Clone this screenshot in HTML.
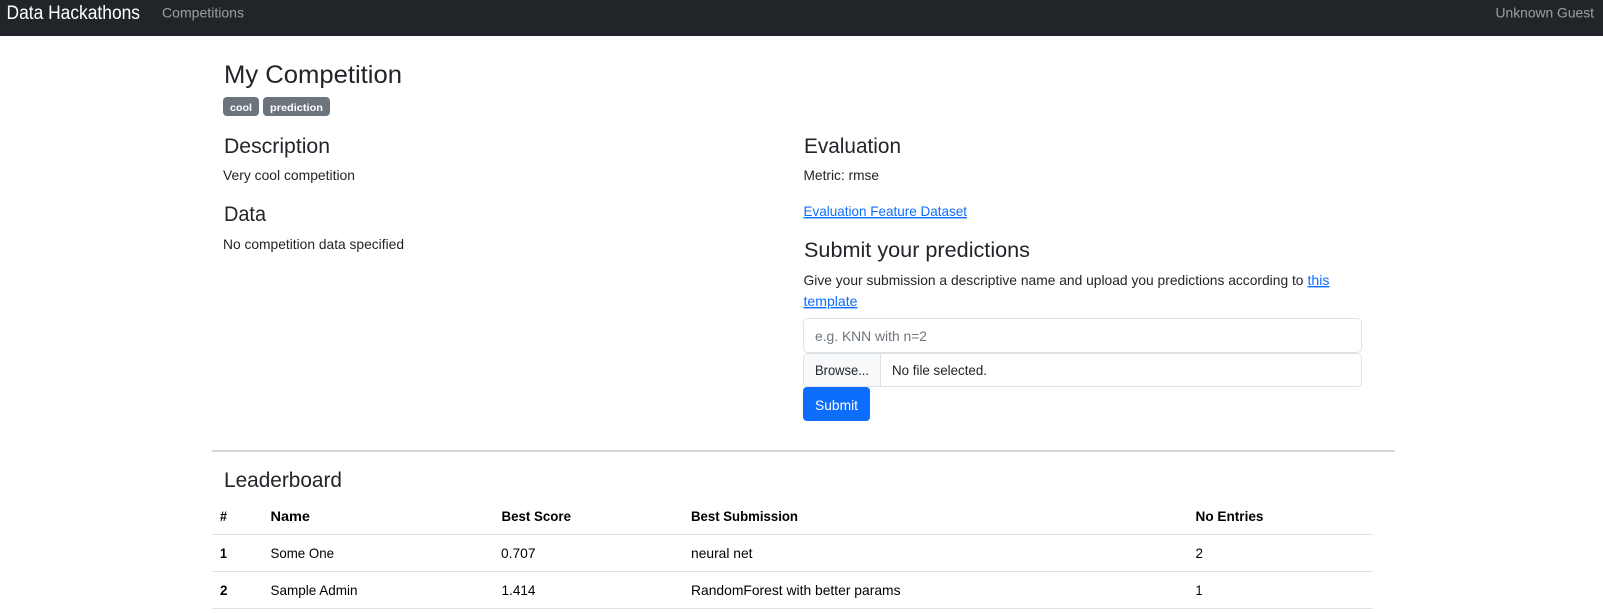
<!DOCTYPE html>
<html lang="en">
<head>
<meta charset="utf-8">
<title>Data Hackathons</title>
<style>
html,body{margin:0;padding:0;background:#fff;width:1603px;height:613px;overflow:hidden}
.b{position:absolute;box-sizing:border-box}
svg{position:absolute;left:0;top:0}
text{font-family:"Liberation Sans",sans-serif;fill:#212529;white-space:pre}
.bd{font-weight:700;fill:#000}
.h3{font-size:25px}
.h4{font-size:21px}
.p{font-size:14px}
.nav{font-size:14px;fill:rgba(255,255,255,.55)}
.lnk{fill:#0d6efd;text-decoration:underline;font-size:14px}
.td{font-size:14px;fill:#000}
.th{font-size:14px}
.bdg{font-size:10.5px;font-weight:700;fill:#fff}
</style>
</head>
<body>
<div class="b" style="left:0;top:0;width:1603px;height:36px;background:#212529"></div>
<div class="b" style="left:223px;top:97px;width:36px;height:19px;background:#6c757d;border-radius:4px"></div>
<div class="b" style="left:263px;top:97px;width:67px;height:19px;background:#6c757d;border-radius:4px"></div>
<div class="b" style="left:803px;top:318px;width:559px;height:35px;border:1px solid #dee2e6;border-radius:5px;background:#fff"></div>
<div class="b" style="left:803px;top:353px;width:559px;height:34px;border:1px solid #dee2e6;border-radius:5px;background:#fff;overflow:hidden"><div style="box-sizing:border-box;width:77px;height:100%;background:#f8f9fa;border-right:1px solid #dee2e6"></div></div>
<div class="b" style="left:803px;top:387px;width:67px;height:34px;background:#0d6efd;border-radius:4px"></div>
<div class="b" style="left:212px;top:450px;width:1183px;height:2px;background:#d6d6d8"></div>
<div class="b" style="left:212px;top:534px;width:1161px;height:1px;background:#dee2e6"></div>
<div class="b" style="left:212px;top:571px;width:1161px;height:1px;background:#dee2e6"></div>
<div class="b" style="left:212px;top:608px;width:1161px;height:1px;background:#dee2e6"></div>
<svg width="1603" height="613" viewBox="0 0 1603 613" xmlns="http://www.w3.org/2000/svg">
<text x="6.5" y="19" font-size="19" style="fill:#fff" textLength="133.5" lengthAdjust="spacingAndGlyphs">Data Hackathons</text>
<text class="nav" x="162" y="17.5" textLength="82" lengthAdjust="spacingAndGlyphs">Competitions</text>
<text class="nav" x="1495.5" y="17.5" textLength="98.5" lengthAdjust="spacingAndGlyphs">Unknown Guest</text>

<text class="h3" x="224" y="83" textLength="178" lengthAdjust="spacingAndGlyphs">My Competition</text>
<text class="bdg" x="230" y="111" textLength="22" lengthAdjust="spacingAndGlyphs">cool</text>
<text class="bdg" x="270" y="111" textLength="53" lengthAdjust="spacingAndGlyphs">prediction</text>

<text class="h4" x="224" y="153" textLength="106" lengthAdjust="spacingAndGlyphs">Description</text>
<text class="p" x="223" y="180" textLength="132" lengthAdjust="spacingAndGlyphs">Very cool competition</text>
<text class="h4" x="224" y="221" textLength="42" lengthAdjust="spacingAndGlyphs">Data</text>
<text class="p" x="223" y="249" textLength="181" lengthAdjust="spacingAndGlyphs">No competition data specified</text>

<text class="h4" x="804" y="153" textLength="97" lengthAdjust="spacingAndGlyphs">Evaluation</text>
<text class="p" x="803.5" y="180" textLength="75.5" lengthAdjust="spacingAndGlyphs">Metric: rmse</text>
<text class="lnk" x="803.5" y="216" textLength="163.5" lengthAdjust="spacingAndGlyphs">Evaluation Feature Dataset</text>
<text class="h4" x="804" y="257" textLength="226" lengthAdjust="spacingAndGlyphs">Submit your predictions</text>
<text class="p" x="803.5" y="285" textLength="500" lengthAdjust="spacingAndGlyphs">Give your submission a descriptive name and upload you predictions according to</text>
<text class="lnk" x="1307.5" y="285" textLength="22" lengthAdjust="spacingAndGlyphs">this</text>
<text class="lnk" x="803.5" y="306" textLength="54" lengthAdjust="spacingAndGlyphs">template</text>

<text class="p" x="815" y="341" style="fill:#6c757d" textLength="112" lengthAdjust="spacingAndGlyphs">e.g. KNN with n=2</text>
<text class="p" x="815" y="375" textLength="54" lengthAdjust="spacingAndGlyphs">Browse...</text>
<text class="p" x="892" y="375" textLength="95" lengthAdjust="spacingAndGlyphs">No file selected.</text>
<text class="p" x="815" y="410" style="fill:#fff" textLength="43" lengthAdjust="spacingAndGlyphs">Submit</text>

<text class="h4" x="224" y="487" font-size="21" textLength="118" lengthAdjust="spacingAndGlyphs">Leaderboard</text>

<text class="th bd" x="220" y="521" textLength="7" lengthAdjust="spacingAndGlyphs">#</text>
<text class="th bd" x="270.5" y="521" textLength="39.5" lengthAdjust="spacingAndGlyphs">Name</text>
<text class="th bd" x="501.5" y="521" textLength="69.5" lengthAdjust="spacingAndGlyphs">Best Score</text>
<text class="th bd" x="691" y="521" textLength="107" lengthAdjust="spacingAndGlyphs">Best Submission</text>
<text class="th bd" x="1195.5" y="521" textLength="68" lengthAdjust="spacingAndGlyphs">No Entries</text>

<text class="th bd" x="220" y="558" textLength="7" lengthAdjust="spacingAndGlyphs">1</text>
<text class="td" x="270.5" y="558" textLength="63.5" lengthAdjust="spacingAndGlyphs">Some One</text>
<text class="td" x="501" y="558" textLength="34.5" lengthAdjust="spacingAndGlyphs">0.707</text>
<text class="td" x="691" y="558" textLength="61.5" lengthAdjust="spacingAndGlyphs">neural net</text>
<text class="td" x="1195.5" y="558" textLength="7.5" lengthAdjust="spacingAndGlyphs">2</text>

<text class="th bd" x="220" y="595" textLength="7.5" lengthAdjust="spacingAndGlyphs">2</text>
<text class="td" x="270.5" y="595" textLength="87" lengthAdjust="spacingAndGlyphs">Sample Admin</text>
<text class="td" x="501.5" y="595" textLength="34" lengthAdjust="spacingAndGlyphs">1.414</text>
<text class="td" x="691" y="595" textLength="209.5" lengthAdjust="spacingAndGlyphs">RandomForest with better params</text>
<text class="td" x="1195.5" y="595" textLength="7" lengthAdjust="spacingAndGlyphs">1</text>
</svg>
</body>
</html>
